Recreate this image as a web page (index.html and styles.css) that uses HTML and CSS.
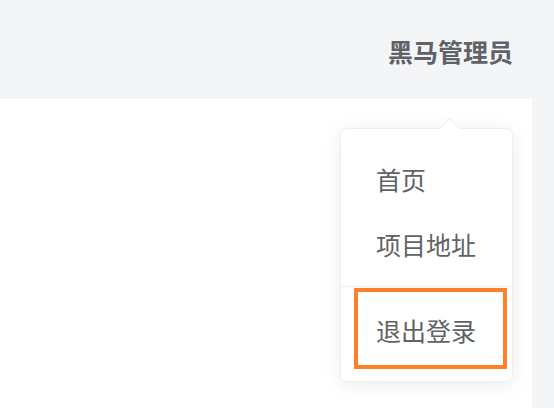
FILE: index.html
```html
<!DOCTYPE html>
<html lang="zh-CN">
<head>
<meta charset="utf-8">
<title>黑马管理员</title>
<link rel="stylesheet" href="styles.css">
</head>
<body>
<div class="app">
  <header class="header">
    <span class="user">黑马管理员</span>
  </header>
  <div class="body">
    <main class="main">
      <div class="dropdown">
        <span class="arrow"></span>
        <ul class="menu">
          <li class="item">首页</li>
          <li class="item">项目地址</li>
          <li class="item divided">退出登录</li>
        </ul>
        <span class="highlight"></span>
      </div>
    </main>
    <aside class="side"></aside>
  </div>
</div>
</body>
</html>
```
FILE: styles.css
```css
html, body {
  margin: 0;
  padding: 0;
  height: 100%;
}
body {
  background: #f4f5f7;
  font-family: "Noto Sans CJK SC", "Noto Sans", sans-serif;
  overflow: hidden;
}
.app {
  display: flex;
  flex-direction: column;
  height: 100%;
}
.header {
  height: 99px;
  flex: none;
  display: flex;
  justify-content: flex-end;
  align-items: center;
  padding-right: 41px;
  padding-top: 3px;
  box-sizing: border-box;
}
.user {
  font-size: 25px;
  font-weight: bold;
  color: #5f6266;
  line-height: 1;
}
.body {
  flex: 1;
  display: flex;
}
.main {
  width: 532px;
  flex: none;
  background: #fff;
  position: relative;
}
.side {
  flex: 1;
}
.dropdown {
  position: absolute;
  left: 340px;
  top: 29px;
  width: 173px;
  box-sizing: border-box;
  background: #fff;
  border: 1px solid #ebeef5;
  border-radius: 7px;
  box-shadow: 0 3px 20px rgba(0, 0, 0, 0.08);
}
.arrow {
  position: absolute;
  top: -8px;
  left: 101px;
  width: 14px;
  height: 14px;
  background: #fff;
  border-top: 1px solid #ebeef5;
  border-left: 1px solid #ebeef5;
  transform: rotate(45deg);
}
.menu {
  list-style: none;
  margin: 0;
  padding: 18px 0 19px;
  position: relative;
}
.item {
  padding: 0 35px;
  line-height: 64.5px;
  font-size: 25px;
  color: #606266;
  white-space: nowrap;
}
.divided {
  margin-top: 10px;
  border-top: 1px solid #ebeef5;
}
.divided::before {
  content: "";
  display: block;
  height: 10.5px;
}
.highlight {
  position: absolute;
  left: 13px;
  top: 159px;
  width: 153px;
  height: 81px;
  box-sizing: border-box;
  border: 4px solid #ff8027;
}
```
